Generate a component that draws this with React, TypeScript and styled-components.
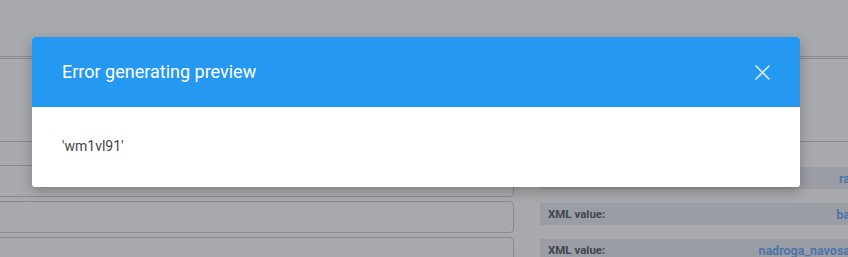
import React from "react";
import styled, { createGlobalStyle } from "styled-components";

const Global = createGlobalStyle`
  html, body { margin: 0; padding: 0; background: #ffffff; overflow: hidden; }
  body { width: 848px; height: 257px; font-family: Roboto, "Liberation Sans", sans-serif; }
  * { box-sizing: border-box; }
`;

const Page = styled.div`
  position: relative;
  width: 848px;
  height: 257px;
  overflow: hidden;
`;

const TopBar = styled.div`
  height: 59px;
  border-bottom: 3px double #cdd0d6;
`;

const Rule = styled.div`
  margin-top: 82px;
  height: 1px;
  background: #cdd0d6;
`;

const Columns = styled.div`
  display: flex;
  gap: 26px;
  margin-top: 23px;
  margin-left: -10px;
`;

const LeftCol = styled.div`
  width: 524px;
  display: flex;
  flex-direction: column;
  gap: 4px;
  flex-shrink: 0;
`;

const Field = styled.div`
  height: 32px;
  border: 1px solid #cdd0d6;
  border-radius: 4px;
  background: #ffffff;
`;

const RightCol = styled.div`
  width: 320px;
  flex-shrink: 0;
  display: flex;
  flex-direction: column;
  gap: 14px;
  padding-top: 2px;
`;

const XmlRow = styled.div`
  height: 22px;
  display: flex;
  align-items: center;
  justify-content: space-between;
  padding: 0 10px 0 8px;
  background: #ebedf3;
  font-family: Roboto, "Liberation Sans", sans-serif;
  font-size: 11.5px;
  font-weight: 700;
`;

const XmlLabel = styled.span<{ $hidden?: boolean }>`
  color: #676a72;
  visibility: ${(p) => (p.$hidden ? "hidden" : "visible")};
`;

const XmlValue = styled.span`
  color: #76b0ff;
  font-size: 12.5px;
`;

const Overlay = styled.div`
  position: absolute;
  inset: 0;
  background: rgba(0, 3, 12, 0.34);
  padding-top: 37px;
  padding-left: 32px;
`;

const Modal = styled.div`
  width: 768px;
  background: #ffffff;
  border-radius: 3px;
  overflow: hidden;
  box-shadow: 0 4px 12px rgba(0, 0, 0, 0.25);
  font-family: Roboto, "Liberation Sans", sans-serif;
`;

const Header = styled.div`
  height: 70px;
  background: #2599f2;
  display: flex;
  align-items: center;
  justify-content: space-between;
  padding: 0 30px;
`;

const Title = styled.h4`
  margin: 0;
  font-size: 18px;
  font-weight: 400;
  color: #ffffff;
  line-height: 20px;
`;

const CloseButton = styled.button`
  border: 0;
  background: transparent;
  padding: 0;
  width: 16px;
  height: 16px;
  display: flex;
  align-items: center;
  justify-content: center;
  cursor: pointer;
  opacity: 0.78;
`;

const Body = styled.div`
  height: 80px;
  padding: 29px 30px;
  font-size: 14px;
  line-height: 20px;
  color: #444444;
`;

export default function App() {
  return (
    <>
      <Global />
      <Page>
        <TopBar />
        <Rule />
        <Columns>
          <LeftCol>
            <Field />
            <Field />
            <Field />
          </LeftCol>
          <RightCol>
            <XmlRow>
              <XmlLabel $hidden>XML value:</XmlLabel>
              <XmlValue>ra</XmlValue>
            </XmlRow>
            <XmlRow>
              <XmlLabel>XML value:</XmlLabel>
              <XmlValue>ba</XmlValue>
            </XmlRow>
            <XmlRow>
              <XmlLabel>XML value:</XmlLabel>
              <XmlValue>nadroga_navosa</XmlValue>
            </XmlRow>
          </RightCol>
        </Columns>
        <Overlay>
          <Modal>
            <Header>
              <Title>Error generating preview</Title>
              <CloseButton aria-label="Close">
                <svg width="15" height="15" viewBox="0 0 15 15">
                  <path d="M1 1 L14 14 M14 1 L1 14" stroke="#ffffff" strokeWidth="1.7" strokeLinecap="round" />
                </svg>
              </CloseButton>
            </Header>
            <Body>'wm1vl91'</Body>
          </Modal>
        </Overlay>
      </Page>
    </>
  );
}
